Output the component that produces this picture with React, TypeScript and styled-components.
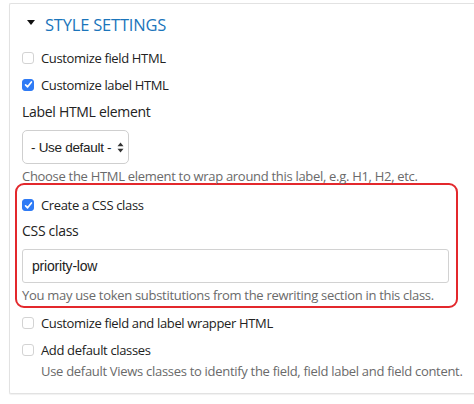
import React from "react";
import styled, { createGlobalStyle } from "styled-components";

const Global = createGlobalStyle`
  html, body { margin: 0; padding: 0; background: #fff; }
  body { font-family: "Open Sans", "DejaVu Sans", sans-serif; color: #222; }
`;

const Page = styled.div`
  padding: 3px 0 0 9px;
  width: 474px;
  height: 404px;
  box-sizing: border-box;
  overflow: hidden;
`;

const Panel = styled.section`
  width: 480px;
  height: 391px;
  box-sizing: border-box;
  border: 1px solid #e2e2e2;
  border-right: none;
  border-radius: 2px 0 0 2px;
  box-shadow: 0 1px 1px rgba(0, 0, 0, 0.06);
  padding: 0 0 0 12px;
`;

const Summary = styled.div`
  display: flex;
  align-items: center;
  height: 40px;
  padding-left: 5px;
  gap: 10px;
`;

const Triangle = styled.span`
  width: 0;
  height: 0;
  border-left: 4.5px solid transparent;
  border-right: 4.5px solid transparent;
  border-top: 5px solid #111;
  margin-top: -4px;
`;

const Heading = styled.h2`
  margin: 0;
  font-size: 16.5px;
  letter-spacing: -0.2px;
  font-weight: normal;
  color: #1b75bb;
`;

const CheckRow = styled.label<{ $h?: number }>`
  display: flex;
  align-items: center;
  gap: 7px;
  height: ${(p) => p.$h ?? 27}px;
  font-size: 13px;
  letter-spacing: -0.35px;
  color: #222;
`;

const Box = styled.span<{ $checked?: boolean }>`
  width: 12px;
  height: 12px;
  box-sizing: border-box;
  border-radius: 3px;
  border: 1px solid ${(p) => (p.$checked ? "#2f7bf5" : "#d3d3d3")};
  background: ${(p) => (p.$checked ? "#2f7bf5" : "#fff")};
  display: flex;
  align-items: center;
  justify-content: center;
  flex: none;
`;

const Check = () => (
  <svg width="9" height="9" viewBox="0 0 9 9">
    <path d="M1.6 4.8 L3.6 6.8 L7.4 2" stroke="#fff" strokeWidth="1.7" fill="none" strokeLinecap="round" strokeLinejoin="round" />
  </svg>
);

const FieldLabel = styled.div<{ $h?: number }>`
  font-size: 14px;
  letter-spacing: -0.3px;
  color: #222;
  height: ${(p) => p.$h ?? 26}px;
  display: flex;
  align-items: center;
`;

const Select = styled.div`
  width: 107px;
  height: 34px;
  box-sizing: border-box;
  border: 1px solid #cfcfcf;
  border-radius: 5px;
  display: flex;
  align-items: center;
  justify-content: space-between;
  padding: 0 4px 0 8px;
  font-family: "Liberation Sans", Arial, sans-serif;
  font-size: 13.5px;
  letter-spacing: -0.3px;
  white-space: nowrap;
  color: #222;
  margin-top: 6px;
`;

const Arrows = () => (
  <svg width="7" height="11" viewBox="0 0 7 11">
    <path d="M3.5 0.5 L6.5 4.3 L0.5 4.3 Z" fill="#333" />
    <path d="M3.5 10.5 L6.5 6.7 L0.5 6.7 Z" fill="#333" />
  </svg>
);

const Description = styled.div<{ $indent?: boolean; $mt?: number }>`
  font-size: 13px;
  letter-spacing: -0.3px;
  line-height: 14px;
  color: #6a6a6a;
  margin-top: ${(p) => p.$mt ?? 5}px;
  padding-left: ${(p) => (p.$indent ? 19 : 0)}px;
  white-space: nowrap;
`;

const Highlight = styled.div`
  margin-left: -7px;
  width: 443px;
  height: 125px;
  box-sizing: border-box;
  border: 2px solid #e3282c;
  border-radius: 9px;
  padding: 6px 0 0 5px;
`;

const TextInput = styled.div`
  width: 427px;
  height: 34px;
  box-sizing: border-box;
  border: 1px solid #d2d2d2;
  border-radius: 3px;
  display: flex;
  align-items: center;
  padding-left: 9px;
  font-family: "Liberation Sans", Arial, sans-serif;
  font-size: 14px;
  letter-spacing: -0.2px;
  color: #222;
  margin-top: 8px;
`;

export default function App() {
  return (
    <>
      <Global />
      <Page>
        <Panel>
          <Summary>
            <Triangle />
            <Heading>STYLE SETTINGS</Heading>
          </Summary>
          <CheckRow>
            <Box />
            Customize field HTML
          </CheckRow>
          <CheckRow>
            <Box $checked>
              <Check />
            </Box>
            Customize label HTML
          </CheckRow>
          <FieldLabel>Label HTML element</FieldLabel>
          <Select>
            - Use default -
            <Arrows />
          </Select>
          <Description>Choose the HTML element to wrap around this label, e.g. H1, H2, etc.</Description>
          <Highlight>
            <CheckRow $h={28}>
              <Box $checked>
                <Check />
              </Box>
              Create a CSS class
            </CheckRow>
            <FieldLabel $h={22}>CSS class</FieldLabel>
            <TextInput>priority-low</TextInput>
            <Description>You may use token substitutions from the rewriting section in this class.</Description>
          </Highlight>
          <CheckRow $h={29}>
            <Box />
            Customize field and label wrapper HTML
          </CheckRow>
          <CheckRow $h={25}>
            <Box />
            Add default classes
          </CheckRow>
          <Description $indent $mt={2}>
            Use default Views classes to identify the field, field label and field content.
          </Description>
        </Panel>
      </Page>
    </>
  );
}
